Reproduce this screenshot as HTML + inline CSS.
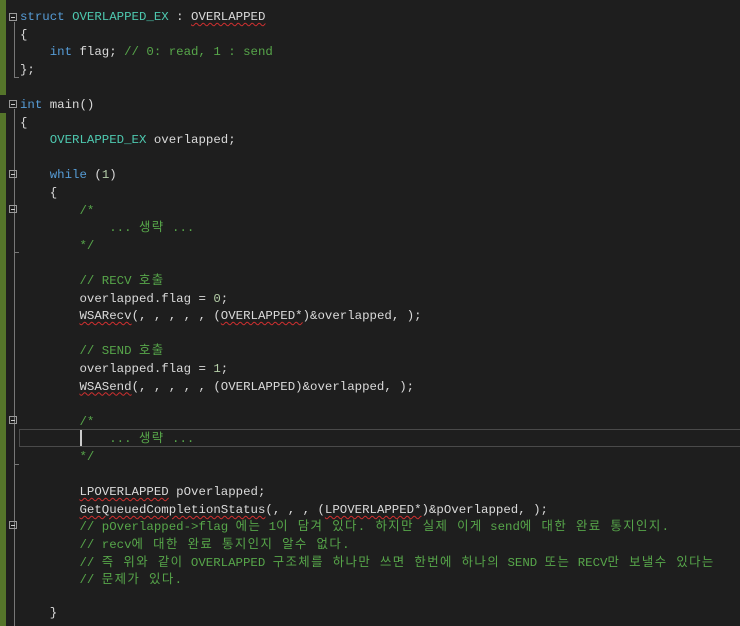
<!DOCTYPE html>
<html><head><meta charset="utf-8"><style>
html,body{margin:0;padding:0;background:#1e1e1e;width:740px;height:626px;overflow:hidden}
.ed{position:relative;width:740px;height:626px;font-family:"Liberation Mono","Noto Sans CJK KR",monospace;font-size:12.4px;color:#dadada}
.l{position:absolute;left:20px;height:18px;line-height:18px;white-space:pre}
.kw{color:#569cd6}.ty{color:#4ec9b0}.c{color:#57a64a}.n{color:#b5cea8}
.k{letter-spacing:1.4px}
.sq{text-decoration:underline wavy #d03030;text-decoration-thickness:1px;text-underline-offset:2px}
.bar{position:absolute;left:0;width:6px;background:#55752a}
.box{position:absolute;left:9px;width:8px;height:8px;border:1px solid #999;box-sizing:border-box}
.box:after{content:"";position:absolute;left:1px;top:3px;width:4px;height:1px;background:#ccc}
.g{position:absolute;left:14px;width:1px;background:#777}
.t{position:absolute;left:14px;width:5px;height:1px;background:#777}
</style></head><body><div class="ed">
<div class="bar" style="top:0;height:95px"></div>
<div class="bar" style="top:113px;height:513px"></div>
<div class="box" style="top:13px"></div>
<div class="g" style="top:22px;height:56px"></div><div class="t" style="top:77px"></div>
<div class="box" style="top:100px"></div>
<div class="g" style="top:109px;height:517px"></div>
<div class="box" style="top:170px"></div>
<div class="box" style="top:205px"></div><div class="t" style="top:252px"></div>
<div class="box" style="top:416px"></div><div class="t" style="top:464px"></div>
<div class="box" style="top:521px"></div>
<div style="position:absolute;left:19px;top:429px;width:722px;height:18px;border:1px solid #4a4a4a;box-sizing:border-box"></div>
<div style="position:absolute;left:80px;top:430px;width:2px;height:16px;background:#ccc"></div>

<div class="l" style="top:8px"><span class="kw">struct</span> <span class="ty">OVERLAPPED_EX</span> : <span class="sq">OVERLAPPED</span></div>
<div class="l" style="top:25.6px">{</div>
<div class="l" style="top:43.2px">    <span class="kw">int</span> flag; <span class="c">// 0: read, 1 : send</span></div>
<div class="l" style="top:60.8px">};</div>
<div class="l" style="top:96px"><span class="kw">int</span> main()</div>
<div class="l" style="top:113.6px">{</div>
<div class="l" style="top:131.2px">    <span class="ty">OVERLAPPED_EX</span> overlapped;</div>
<div class="l" style="top:166.4px">    <span class="kw">while</span> (<span class="n">1</span>)</div>
<div class="l" style="top:184px">    {</div>
<div class="l c" style="top:201.6px">        /*</div>
<div class="l c" style="top:219.2px">            ... <span class="k">생략</span> ...</div>
<div class="l c" style="top:236.8px">        */</div>
<div class="l c" style="top:272px">        // RECV <span class="k">호출</span></div>
<div class="l" style="top:289.6px">        overlapped.flag = <span class="n">0</span>;</div>
<div class="l" style="top:307.2px">        <span class="sq">WSARecv</span>(, , , , , (<span class="sq">OVERLAPPED*</span>)&amp;overlapped, );</div>
<div class="l c" style="top:342.4px">        // SEND <span class="k">호출</span></div>
<div class="l" style="top:360px">        overlapped.flag = <span class="n">1</span>;</div>
<div class="l" style="top:377.6px">        <span class="sq">WSASend</span>(, , , , , (OVERLAPPED)&amp;overlapped, );</div>
<div class="l c" style="top:412.8px">        /*</div>
<div class="l c" style="top:430.4px">            ... <span class="k">생략</span> ...</div>
<div class="l c" style="top:448px">        */</div>
<div class="l" style="top:483.2px">        <span class="sq">LPOVERLAPPED</span> pOverlapped;</div>
<div class="l" style="top:500.8px">        <span class="sq">GetQueuedCompletionStatus</span>(, , , (<span class="sq">LPOVERLAPPED*</span>)&amp;pOverlapped, );</div>
<div class="l c" style="top:518.4px">        // pOverlapped-&gt;flag <span class="k">에는</span> 1<span class="k">이 담겨 있다. 하지만 실제 이게</span> send<span class="k">에 대한 완료 통지인지</span>.</div>
<div class="l c" style="top:536px">        // recv<span class="k">에 대한 완료 통지인지 알수 없다</span>.</div>
<div class="l c" style="top:553.6px">        // <span class="k">즉 위와 같이</span> OVERLAPPED <span class="k">구조체를 하나만 쓰면 한번에 하나의</span> SEND <span class="k">또는</span> RECV<span class="k">만 보낼수 있다는</span></div>
<div class="l c" style="top:571.2px">        // <span class="k">문제가 있다</span>.</div>
<div class="l" style="top:604px">    }</div>
</div></body></html>
